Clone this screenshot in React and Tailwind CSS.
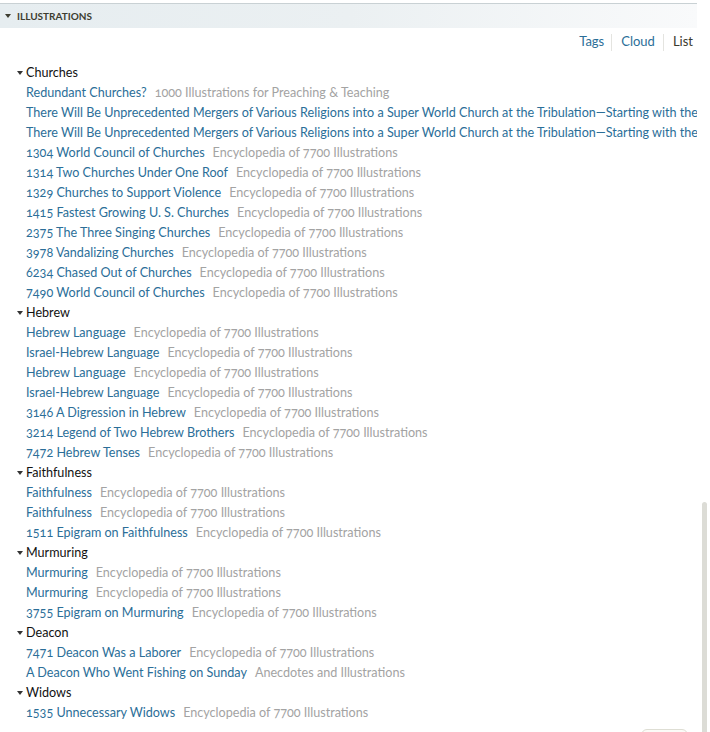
import React from 'react';

const SOURCE_7700 = 'Encyclopedia of 7700 Illustrations';
const MERGERS =
  'There Will Be Unprecedented Mergers of Various Religions into a Super World Church at the Tribulation\u2014Starting with the';

const GROUPS = [
  {
    name: 'Churches',
    items: [
      ['Redundant Churches?', '1000 Illustrations for Preaching & Teaching'],
      [MERGERS, ''],
      [MERGERS, ''],
      ['1304 World Council of Churches', SOURCE_7700],
      ['1314 Two Churches Under One Roof', SOURCE_7700],
      ['1329 Churches to Support Violence', SOURCE_7700],
      ['1415 Fastest Growing U. S. Churches', SOURCE_7700],
      ['2375 The Three Singing Churches', SOURCE_7700],
      ['3978 Vandalizing Churches', SOURCE_7700],
      ['6234 Chased Out of Churches', SOURCE_7700],
      ['7490 World Council of Churches', SOURCE_7700],
    ],
  },
  {
    name: 'Hebrew',
    items: [
      ['Hebrew Language', SOURCE_7700],
      ['Israel-Hebrew Language', SOURCE_7700],
      ['Hebrew Language', SOURCE_7700],
      ['Israel-Hebrew Language', SOURCE_7700],
      ['3146 A Digression in Hebrew', SOURCE_7700],
      ['3214 Legend of Two Hebrew Brothers', SOURCE_7700],
      ['7472 Hebrew Tenses', SOURCE_7700],
    ],
  },
  {
    name: 'Faithfulness',
    items: [
      ['Faithfulness', SOURCE_7700],
      ['Faithfulness', SOURCE_7700],
      ['1511 Epigram on Faithfulness', SOURCE_7700],
    ],
  },
  {
    name: 'Murmuring',
    items: [
      ['Murmuring', SOURCE_7700],
      ['Murmuring', SOURCE_7700],
      ['3755 Epigram on Murmuring', SOURCE_7700],
    ],
  },
  {
    name: 'Deacon',
    items: [
      ['7471 Deacon Was a Laborer', SOURCE_7700],
      ['A Deacon Who Went Fishing on Sunday', 'Anecdotes and Illustrations'],
    ],
  },
  {
    name: 'Widows',
    items: [['1535 Unnecessary Widows', SOURCE_7700]],
  },
];

function Caret({ className = '' }) {
  return (
    <svg width="6" height="4" viewBox="0 0 6 4" className={className} aria-hidden="true">
      <path d="M0 0h6L3 4z" fill="currentColor" />
    </svg>
  );
}

function Group({ group }) {
  return (
    <div>
      <div className="flex h-5 items-center text-[#111]">
        <Caret className="ml-[17px] mr-[3px] text-[#333]" />
        <span>{group.name}</span>
      </div>
      {group.items.map(([title, source], i) => (
        <div key={i} className="flex h-5 items-center pl-[26px] whitespace-nowrap">
          <a href="#" className="text-[#2b6e98] hover:underline">{title}</a>
          {source && <span className="ml-2 text-[#a3a3a3]">{source}</span>}
        </div>
      ))}
    </div>
  );
}

export default function App() {
  return (
    <div className="relative h-[732px] w-[710px] overflow-hidden bg-white font-['Lato','Noto_Sans',sans-serif] text-[12.6px] [font-variant-numeric:oldstyle-nums]">
      <div className="w-[697px] overflow-hidden">
        <div className="mt-[3px] border-t border-[#c9d1d4]">
          <div className="flex h-[24px] items-center bg-gradient-to-r from-[#e6edf0] via-[#ebf0f2] to-[#f9fafb]">
            <Caret className="ml-[5px] mr-[6px] text-[#3d3d30]" />
            <span className="text-[10px] font-bold text-[#3d3d30]">ILLUSTRATIONS</span>
          </div>
        </div>

        {/* view switcher */}
        <div className="mt-[3px] flex h-[22px] items-center justify-end pr-[4px] text-[13px]">
          <a href="#" className="text-[#2b6e98]">Tags</a>
          <span className="ml-[7px] mr-[9px] h-[17px] w-px bg-[#e4e4e0]" />
          <a href="#" className="text-[#2b6e98]">Cloud</a>
          <span className="ml-[8px] mr-[9px] h-[17px] w-px bg-[#e4e4e0]" />
          <span className="text-[#3a3a2e]">List</span>
        </div>

        <div className="mt-[10px]">
          {GROUPS.map((g) => (
            <Group key={g.name} group={g} />
          ))}
        </div>
      </div>

      <div className="absolute right-[3px] top-[502px] h-[240px] w-[5px] rounded-full bg-[#dcdcd6]" />
      <div className="absolute left-[641px] top-[729px] h-[20px] w-[47px] rounded-md border border-[#deded4] bg-[#fbfbf7]" />
    </div>
  );
}
